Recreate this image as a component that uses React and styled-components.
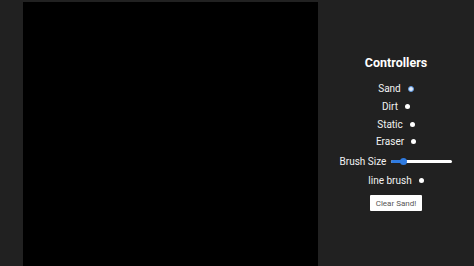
import React, { useState } from "react";
import styled, { createGlobalStyle } from "styled-components";

const Global = createGlobalStyle`
  html, body { margin: 0; padding: 0; background: #212121; }
  body { font-family: Roboto, "Noto Sans", Arial, sans-serif; color: #fff; }
`;

const Page = styled.div`
  display: flex;
  height: 266px;
  overflow: hidden;
  padding-left: 23px;
`;

const Canvas = styled.div`
  width: 295px;
  margin-top: 2px;
  background: #000;
  flex: none;
`;

const Panel = styled.div`
  flex: 1;
  display: flex;
  flex-direction: column;
  align-items: center;
  padding-top: 55px;
`;

const Title = styled.h2`
  margin: 0 0 9px;
  font-size: 12.5px;
  font-weight: 700;
  line-height: 16px;
`;

const Row = styled.label`
  display: flex;
  align-items: center;
  gap: ${(p) => p.$gap || 7}px;
  height: 17.7px;
  font-size: 10px;
  color: #f2f2f2;
  margin-top: ${(p) => p.$mt || 0}px;
`;

const Radio = styled.span`
  width: 5px;
  height: 5px;
  border-radius: 50%;
  box-sizing: border-box;
  background: #fff;
  ${(p) =>
    p.$checked &&
    "width: 6px; height: 6px; background: #dfe9f7; border: 1.5px solid #5d98e2;"}
`;

const Slider = styled.div`
  position: relative;
  width: 61px;
  height: 3px;
  background: #fff;
  border-radius: 2px;
`;

const Fill = styled.div`
  height: 100%;
  background: #2f7be0;
  border-radius: 2px;
`;

const Thumb = styled.div`
  position: absolute;
  top: -2px;
  width: 7px;
  height: 7px;
  border-radius: 50%;
  background: #2f7be0;
`;

const Button = styled.button`
  margin-top: 6px;
  width: 52px;
  height: 16px;
  flex: none;
  padding: 0;
  border: none;
  border-radius: 1px;
  background: #fff;
  color: #555;
  font-family: Roboto, Arial, sans-serif;
  font-size: 8px;
`;

const items = ["Sand", "Dirt", "Static", "Eraser"];

export default function App() {
  const [sel] = useState("Sand");
  const pct = 22;
  return (
    <>
      <Global />
      <Page>
        <Canvas />
        <Panel>
          <Title>Controllers</Title>
          {items.map((it) => (
            <Row key={it}>
              {it}
              <Radio $checked={sel === it} />
            </Row>
          ))}
          <Row $mt={2} $gap={5}>
            Brush Size
            <Slider>
              <Fill style={{ width: `${pct}%` }} />
              <Thumb style={{ left: `calc(${pct}% - 5px)` }} />
            </Slider>
          </Row>
          <Row $mt={1}>
            line brush
            <Radio />
          </Row>
          <Button>Clear Sand!</Button>
        </Panel>
      </Page>
    </>
  );
}
